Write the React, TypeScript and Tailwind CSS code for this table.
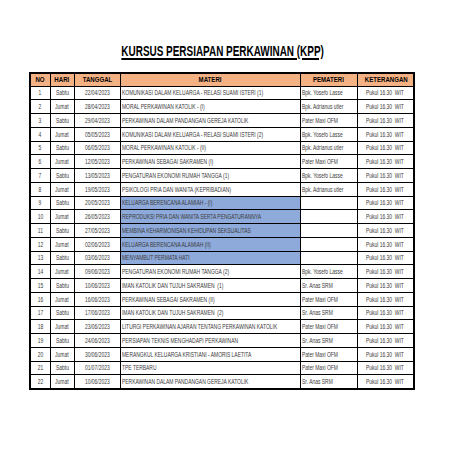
import React from "react";

type Row = [string, string, string, string, string, boolean?];

const rows: Row[] = [
  ["1", "Sabtu", "22/04/2023", "KOMUNIKASI DALAM KELUARGA - RELASI SUAMI ISTERI (1)", "Bpk. Yosefo Lasse"],
  ["2", "Jumat", "28/04/2023", "MORAL PERKAWINAN KATOLIK - (I)", "Bpk. Adrianus utler"],
  ["3", "Sabtu", "29/04/2023", "PERKAWINAN DALAM PANDANGAN GEREJA KATOLIK", "Pater Maxi OFM"],
  ["4", "Jumat", "05/05/2023", "KOMUNIKASI DALAM KELUARGA - RELASI SUAMI ISTERI (2)", "Bpk. Yosefo Lasse"],
  ["5", "Sabtu", "06/05/2023", "MORAL PERKAWINAN KATOLIK - (II)", "Bpk. Adrianus utler"],
  ["6", "Jumat", "12/05/2023", "PERKAWINAN SEBAGAI SAKRAMEN (I)", "Pater Maxi OFM"],
  ["7", "Sabtu", "13/05/2023", "PENGATURAN EKONOMI RUMAH TANGGA (1)", "Bpk. Yosefo Lasse"],
  ["8", "Jumat", "19/05/2023", "PSIKOLOGI PRIA DAN WANITA (KEPRIBADIAN)", "Bpk. Adrianus utler"],
  ["9", "Sabtu", "20/05/2023", "KELUARGA BERENCANA ALAMIAH - (I)", "", true],
  ["10", "Jumat", "26/05/2023", "REPRODUKSI PRIA DAN WANITA SERTA PENGATURANNYA", "", true],
  ["11", "Sabtu", "27/05/2023", "MEMBINA KEHARMONISAN KEHIDUPAN SEKSUALITAS", "", true],
  ["12", "Jumat", "02/06/2023", "KELUARGA BERENCANA ALAMIAH (II)", "", true],
  ["13", "Sabtu", "03/06/2023", "MENYAMBUT PERMATA HATI", "", true],
  ["14", "Jumat", "09/06/2023", "PENGATURAN EKONOMI RUMAH TANGGA (2)", "Bpk. Yosefo Lasse"],
  ["15", "Sabtu", "10/06/2023", "IMAN KATOLIK DAN TUJUH SAKRAMEN  (1)", "Sr. Anas SRM"],
  ["16", "Jumat", "16/06/2023", "PERKAWINAN SEBAGAI SAKRAMEN (II)", "Pater Maxi OFM"],
  ["17", "Sabtu", "17/06/2023", "IMAN KATOLIK DAN TUJUH SAKRAMEN  (2)", "Sr. Anas SRM"],
  ["18", "Jumat", "23/06/2023", "LITURGI PERKAWINAN AJARAN TENTANG PERKAWINAN KATOLIK", "Pater Maxi OFM"],
  ["19", "Sabtu", "24/06/2023", "PERSIAPAN TEKNIS MENGHADAPI PERKAWINAN", "Sr. Anas SRM"],
  ["20", "Jumat", "30/06/2023", "MERANGKUL KELUARGA KRISTIANI - AMORIS LAETITA", "Pater Maxi OFM"],
  ["21", "Sabtu", "01/07/2023", "TPE TERBARU", "Pater Maxi OFM"],
  ["22", "Jumat", "10/06/2023", "PERKAWINAN DALAM PANDANGAN GEREJA KATOLIK", "Sr. Anas SRM"],
];

const font = { fontFamily: '"Liberation Sans", Arial, sans-serif' };

// Arial is wider than the sheet's Calibri, so text is squeezed horizontally
const Narrow = ({ children, left }: { children: React.ReactNode; left?: boolean }) => (
  <span className={`inline-block whitespace-pre scale-x-[0.76] ${left ? "origin-left" : "origin-center"}`}>
    {children}
  </span>
);

const cell = "border border-black p-0 overflow-hidden whitespace-nowrap";

export default function App() {
  return (
    <div className="w-[452px] h-[452px] bg-white pt-[44px]" style={font}>
      <h1 className="text-center text-[14px] leading-[15px] font-bold text-black pl-[-0px] mr-[6px]">
        <span className="inline-block scale-x-[0.71] underline decoration-[1.5px] underline-offset-[2px]">
          KURSUS PERSIAPAN PERKAWINAN (KPP)
        </span>
      </h1>

      <table className="mt-[13px] ml-[29px] w-[384px] table-fixed border-collapse border-2 border-black text-[#3a3a3a]">
        <colgroup>
          <col className="w-[20px]" />
          <col className="w-[24px]" />
          <col className="w-[46px]" />
          <col className="w-[180px]" />
          <col className="w-[57px]" />
          <col className="w-[57px]" />
        </colgroup>
        <thead>
          <tr className="h-[13px] bg-[#f4b183] text-[8px] leading-[9px] font-bold text-black">
            {["NO", "HARI", "TANGGAL", "MATERI", "PEMATERI", "KETERANGAN"].map((h) => (
              <th key={h} className={cell}>
                <Narrow>{h}</Narrow>
              </th>
            ))}
          </tr>
        </thead>
        <tbody className="text-[6.5px] leading-[7px]">
          {rows.map(([no, hari, tgl, materi, pemateri, blue]) => (
            <tr key={no} className="h-[13.75px]">
              <td className={`${cell} text-center`}><Narrow>{no}</Narrow></td>
              <td className={`${cell} text-center`}><Narrow>{hari}</Narrow></td>
              <td className={`${cell} text-center`}><Narrow>{tgl}</Narrow></td>
              <td className={`${cell} pl-[1px] ${blue ? "bg-[#8eaadb]" : ""}`}>
                <Narrow left>{materi}</Narrow>
              </td>
              <td className={`${cell} pl-[1px]`}><Narrow left>{pemateri}</Narrow></td>
              <td className={`${cell} text-center`}><Narrow>{"Pukul 16.30  WIT"}</Narrow></td>
            </tr>
          ))}
        </tbody>
      </table>
    </div>
  );
}
